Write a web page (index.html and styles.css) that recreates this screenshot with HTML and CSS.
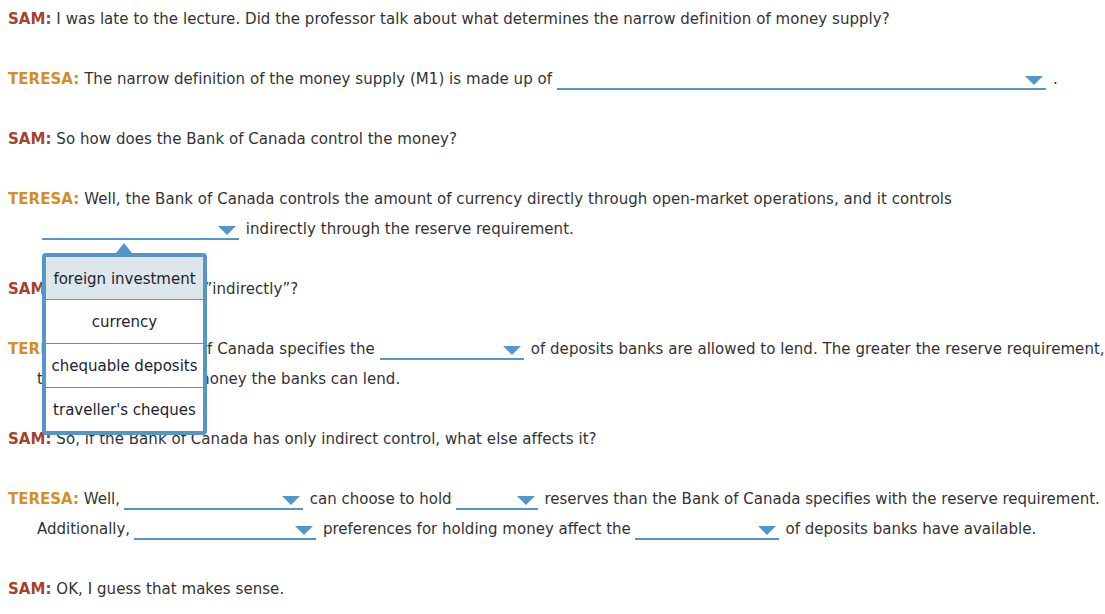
FILE: index.html
```html
<!DOCTYPE html>
<html>
<head>
<meta charset="utf-8">
<link rel="stylesheet" href="styles.css">
</head>
<body>
<div class="dialog">
  <p class="line"><span class="sam">SAM:</span> I was late to the lecture. Did the professor talk about what determines the narrow definition of money supply?</p>
  <p class="line"><span class="teresa">TERESA:</span> The narrow definition of the money supply (M1) is made up of<span class="sel w489"><i class="arrow"></i></span> .</p>
  <p class="line"><span class="sam">SAM:</span> So how does the Bank of Canada control the money?</p>
  <p class="line"><span class="teresa">TERESA:</span> Well, the Bank of Canada controls the amount of currency directly through open-market operations, and it controls <span class="sel w197 open"><i class="arrow"></i>
    <span class="menu">
      <span class="opt active">foreign investment</span>
      <span class="opt">currency</span>
      <span class="opt">chequable deposits</span>
      <span class="opt">traveller's cheques</span>
    </span>
  </span> indirectly through the reserve requirement.</p>
  <p class="line"><span class="sam">SAM:</span> What do you mean &rdquo;indirectly&rdquo;?</p>
  <p class="line"><span class="teresa">TERESA:</span> Well, the Bank of Canada specifies the<span class="sel w144"><i class="arrow"></i></span> of deposits banks are allowed to lend. The greater the reserve requirement, the lower amount of money the banks can lend.</p>
  <p class="line"><span class="sam">SAM:</span> So, if the Bank of Canada has only indirect control, what else affects it?</p>
  <p class="line tight"><span class="teresa">TERESA:</span> Well,<span class="sel w179"><i class="arrow"></i></span> can choose to hold<span class="sel w82"><i class="arrow"></i></span> reserves than the Bank of Canada specifies with the reserve requirement. Additionally,<span class="sel w182"><i class="arrow"></i></span> preferences for holding money affect the<span class="sel w144"><i class="arrow"></i></span> of deposits banks have available.</p>
  <p class="line"><span class="sam">SAM:</span> OK, I guess that makes sense.</p>
</div>
</body>
</html>
```
FILE: styles.css
```css
body {
  margin: 0;
  background: #fff;
  font-family: "DejaVu Sans", Verdana, sans-serif;
  font-size: 15px;
  color: #333;
  overflow: hidden;
}
.dialog {
  padding: 4px 0 0 8px;
}
.line {
  margin: 0 -10px 30px 0;
  line-height: 30px;
  padding-left: 29px;
  text-indent: -29px;
  letter-spacing: 0.05px;
}
.line.tight {
  letter-spacing: 0;
}
.sam, .teresa {
  font-weight: bold;
}
.sam { color: #a8402c; }
.teresa { color: #d48e26; }
.sel {
  display: inline-block;
  position: relative;
  height: 18px;
  border-bottom: 2px solid #5596c8;
  vertical-align: -6px;
  text-indent: 0;
  margin: 0 2px 0 5px;
}
.tight .sel {
  margin-left: 4px;
}
.w489 { width: 489px; }
.w197 { width: 197px; }
.w144 { width: 144px; }
.w179 { width: 179px; }
.w82 { width: 82px; }
.w182 { width: 182px; }
.arrow {
  position: absolute;
  right: 3px;
  top: 6px;
  width: 0;
  height: 0;
  border-left: 9px solid transparent;
  border-right: 9px solid transparent;
  border-top: 9px solid #5596c8;
}
.menu {
  position: absolute;
  left: 0;
  top: 33px;
  width: 157px;
  border: 4px solid #5596c8;
  border-radius: 4px;
  background: #fff;
  display: flex;
  flex-direction: column;
  z-index: 5;
  letter-spacing: 0;
}
.menu::before {
  content: "";
  position: absolute;
  left: 70px;
  top: -14px;
  border-left: 8px solid transparent;
  border-right: 8px solid transparent;
  border-bottom: 10px solid #5596c8;
}
.opt {
  display: block;
  height: 43px;
  line-height: 45px;
  text-align: center;
  color: #1c2330;
  border-top: 1px solid #5596c8;
  white-space: nowrap;
  letter-spacing: 0;
  overflow: hidden;
}
.opt:first-child {
  border-top: none;
  height: 42px;
  line-height: 44px;
}
.opt.active {
  background: #dde6ea;
}
```
